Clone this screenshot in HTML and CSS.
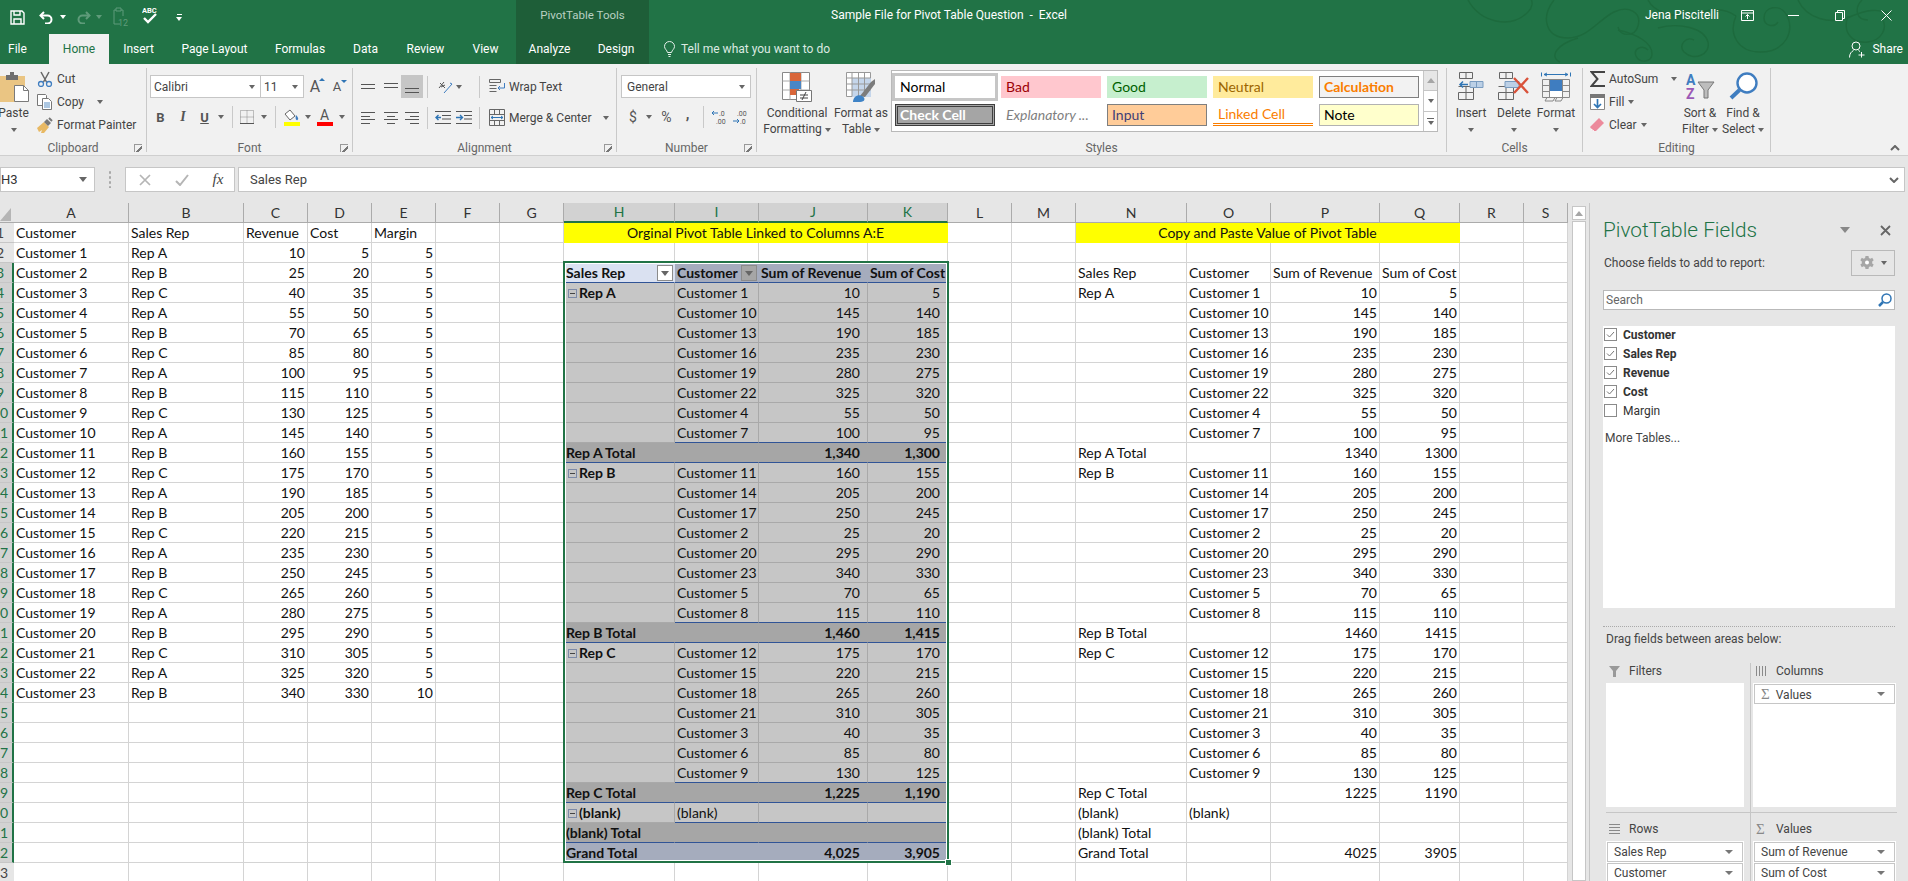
FILE: index.html
```html
<!DOCTYPE html>
<html lang="en">
<head>
<meta charset="utf-8">
<title>Sample File for Pivot Table Question - Excel</title>
<link rel="stylesheet" href="styles.css">
</head>
<body>
<header class="title">
  <svg class="swirl" width="450" height="64" viewBox="0 0 450 64" fill="none" stroke="#1d6a3d" stroke-width="1.4">
    <path d="M10 0c12 22 42 30 60 12 10-10 0-22-12-14M96 0c-14 18-8 38 14 38 20 0 30-18 46-26 14-7 28 0 24 14-3 11-18 11-20 1"/>
    <path d="M160 30c18 4 34 12 34 24 0 8-12 10-16 2-3-7 6-12 12-6M120 38c-20 6-30 18-18 24M190 0c6 12 24 18 44 14 18-4 30-8 44 2"/>
    <path d="M200 28c22-6 46 0 50 14 3 12-14 20-24 10-6-7 2-16 10-12M278 16c-8 18 2 36 24 36 26 0 36-22 26-38-6-10-22-8-22 4 0 8 10 10 14 4"/>
    <path d="M340 0c8 18 32 26 54 16 14-6 26-8 40-2M390 16c-6 16 4 28 20 26 14-2 20-14 14-24M404 0c-8 8-6 20 6 20"/>
  </svg>
  <div class="trow">
    <div class="qat">
      <svg width="15" height="15" viewBox="0 0 15 15" fill="none" stroke="#fff" stroke-width="1.4"><path d="M1 1h11l2 2v11H1z"/><path d="M4 1v4h6V1M4 14V9h7v5"/></svg>
      <svg class="i-undo" width="15" height="13" viewBox="0 0 15 13" fill="none" stroke="#fff" stroke-width="2"><path d="M5 1 1.500 4.500 5 8"/><path d="M2 4.500h6.500a4 4 0 0 1 0 8H6"/></svg>
      <i class="c cw c-undo"></i>
      <svg class="i-redo" width="15" height="13" viewBox="0 0 15 13" fill="none" stroke="#5f9b7a" stroke-width="2"><path d="M10 1l3.500 3.500L10 8"/><path d="M13 4.500H6.500a4 4 0 0 0 0 8H9"/></svg>
      <i class="c cd c-redo"></i>
      <svg class="i-touch" width="15" height="20" viewBox="0 0 15 20" fill="none" stroke="#5f9b7a"><path d="M3 3H1v14h6M8 3h2v6M3 1h5v3H3z"/><text x="5" y="19" font-size="9" fill="#5f9b7a" stroke="none" font-family="Roboto">12</text></svg>
      <svg class="i-abc" width="16" height="19" viewBox="0 0 16 19"><text x="0" y="7" font-size="7.500" font-weight="700" fill="#fff" font-family="Roboto">ABC</text><path d="M2 12l4 4 8-8" fill="none" stroke="#fff" stroke-width="2.400"/></svg>
      <span class="custom"><b></b><i class="c cw"></i></span>
    </div>
    <div class="ctx ctxtitle">PivotTable Tools</div>
    <div class="doc">Sample File for Pivot Table Question&nbsp; -&nbsp; Excel</div>
    <div class="winc">
      <span class="user">Jena Piscitelli</span>
      <svg width="13" height="11" viewBox="0 0 13 11" fill="none" stroke="#fff"><path d="M.5.500h12v10H.500zM.5 3h12M6.500 9V4.500M4.500 6.500l2-2 2 2"/></svg>
      <svg width="11" height="11" viewBox="0 0 11 11" stroke="#fff"><path d="M0 5.500h11"/></svg>
      <svg width="10" height="11" viewBox="0 0 10 11" fill="none" stroke="#fff"><path d="M.5 2.500h7v8h-7zM2.500 2.500V.5h7v8h-2"/></svg>
      <svg width="11" height="11" viewBox="0 0 11 11" stroke="#fff"><path d="M.5.500l10 10M10.500.500l-10 10"/></svg>
    </div>
  </div>
  <div class="trow tabsrow">
    <nav class="tabs">
      <span class="file">File</span><span class="on">Home</span><span>Insert</span><span>Page Layout</span><span>Formulas</span><span>Data</span><span>Review</span><span>View</span>
    </nav>
    <div class="ctx ctxtabs"><span>Analyze</span><span>Design</span></div>
    <div class="tell">
      <svg width="11" height="16" viewBox="0 0 11 16" fill="none" stroke="#e6f0ea"><path d="M3.500 11.500C3 9 .5 8 .5 5.500a5 5 0 0 1 10 0c0 2.500-2.500 3.500-3 6zM4 13.500h3M4.500 15.500h2"/></svg>
      <span>Tell me what you want to do</span>
    </div>
    <div class="share">
      <svg width="16" height="17" viewBox="0 0 16 17" fill="none" stroke="#fff"><circle cx="7" cy="5" r="4"/><path d="M.5 16.500c0-4 2-6 4-7M9.500 9.500l1.500 1M12.500 11v5.500M9.500 14h6"/></svg>
      <span>Share</span>
    </div>
  </div>
</header>

<section class="ribbon">
  <div class="grp g-clip">
    <div class="gtop clip">
      <div class="big paste">
        <div class="bi"><svg width="30" height="30" viewBox="0 0 30 30"><path d="M0 4h25v26H0z" fill="#eac583"/><path d="M6 3h12v5H6z" fill="#6f6f6f"/><path d="M10 0h4v4h-4z" fill="#6f6f6f"/><path d="M14.500 13.500h9l5 5v11h-14z" fill="#fff" stroke="#7a7a7a"/><path d="M23.500 13.500v5h5" fill="none" stroke="#7a7a7a"/></svg></div>
        <span>Paste</span><span><i class="c"></i></span>
      </div>
      <div class="clipcol">
        <div class="tool"><svg width="16" height="16" viewBox="0 0 16 16" fill="none"><path d="M4 1l5.500 10M12 1 6.500 11" stroke="#666" stroke-width="1.500"/><circle cx="4" cy="13" r="2.500" stroke="#3f7dc0" stroke-width="1.300"/><circle cx="12" cy="13" r="2.500" stroke="#3f7dc0" stroke-width="1.300"/></svg><span>Cut</span></div>
        <div class="tool"><svg width="16" height="16" viewBox="0 0 16 16" fill="#fff" stroke="#777"><path d="M.5.500h8l1 1v10H.5z"/><path d="M5.500 4.500h6l3 3v8h-9z"/><path d="M7 9h6M7 11h6M7 13h6" stroke="#5b8fc4"/></svg><span>Copy</span><i class="c copyc"></i></div>
        <div class="tool"><svg width="16" height="16" viewBox="0 0 16 16"><path d="M0 11 7 5l5 5-5 6H4l1-3-3 2z" fill="#e8b964"/><path d="M7 5l3-3 4 4-3 3z" fill="#777"/><path d="M12 1l3 3" stroke="#777" stroke-width="2"/></svg><span>Format Painter</span></div>
      </div>
    </div>
    <div class="glabel">Clipboard</div><i class="launch"></i>
  </div>

  <div class="grp g-font">
    <div class="gtop">
      <div class="rw1 font1">
        <div class="combo cf"><span>Calibri</span><i class="c"></i></div>
        <div class="combo cs"><span>11</span><i class="c"></i></div>
        <span class="gA up">A<i></i></span><span class="gA dn">A<i></i></span>
      </div>
      <div class="rw2 font2">
        <b class="tb">B</b><i class="ti">I</i><u class="tu">U</u><i class="c"></i><i class="sep"></i>
        <svg width="14" height="14" viewBox="0 0 14 14" fill="none" stroke="#888" stroke-dasharray="1 1"><path d="M.5.500h13v13H.5zM7 .5v13M.5 7h13"/><path d="M0 13.500h14" stroke="#555" stroke-dasharray="none"/></svg><i class="c"></i><i class="sep"></i>
        <svg width="16" height="17" viewBox="0 0 16 17"><path d="M1 5l5-4 5 6-5 4z" fill="#fff" stroke="#666"/><path d="M12 6c2 2 3 4 1.500 5S11 9 12 6z" fill="#3f7dc0"/><path d="M0 13h16v4H0z" fill="#ff0"/></svg><i class="c"></i>
        <span class="fc">A</span><i class="c"></i>
      </div>
    </div>
    <div class="glabel">Font</div><i class="launch"></i>
  </div>

  <div class="grp g-align">
    <div class="gtop">
      <div class="rw1 al1">
        <svg class="ln" width="14" height="10" viewBox="0 0 14 10" stroke="#555"><path d="M0 .5h14M0 4.500h14M0 8.500h14" transform="translate(0 -2)"/></svg>
        <svg class="ln" width="14" height="10" viewBox="0 0 14 10" stroke="#555"><path d="M0 1.500h14M0 5.500h14"/></svg>
        <span class="alsel"><svg width="14" height="6" viewBox="0 0 14 6" stroke="#555"><path d="M0 .5h14M0 4.500h14"/></svg></span>
        <i class="sep"></i>
        <span class="orient"><svg width="16" height="15" viewBox="0 0 16 15" fill="none" stroke="#555"><path d="M2 9l5-6M3 4l5 5M4 8l4-2"/><path d="M7 14l8-9-2-1" stroke="#3f7dc0"/></svg><i class="c"></i></span>
        <i class="sep"></i>
        <span class="tool wrap"><svg width="16" height="17" viewBox="0 0 16 17" fill="none" stroke="#666"><path d="M.5 1.500h11v3H.5zM.5 7.500h7M.5 10.500h7M.5 13.500h7"/><path d="M15.500 5v5h-6M11 8l-2 2 2 2" stroke="#3f7dc0"/></svg><span>Wrap Text</span></span>
      </div>
      <div class="rw2 al2">
        <svg width="14" height="12" viewBox="0 0 14 12" stroke="#555"><path d="M0 .5h14M0 4.500h9M0 7.500h14M0 11.500h9"/></svg>
        <svg width="14" height="12" viewBox="0 0 14 12" stroke="#555"><path d="M0 .5h14M3 4.500h8M0 7.500h14M3 11.500h8"/></svg>
        <svg width="14" height="12" viewBox="0 0 14 12" stroke="#555"><path d="M0 .5h14M5 4.500h9M0 7.500h14M5 11.500h9"/></svg>
        <i class="sep"></i>
        <svg width="16" height="13" viewBox="0 0 16 13" fill="none" stroke="#555"><path d="M0 .5h16M7 4.500h9M7 8h9M0 12.500h16"/><path d="M6 6.500H1M3.500 4l-2.500 2.500L3.500 9" stroke="#2f75b5" stroke-width="1.400"/></svg>
        <svg width="16" height="13" viewBox="0 0 16 13" fill="none" stroke="#555"><path d="M0 .5h16M8 4.500h8M8 8h8M0 12.500h16"/><path d="M0 6.500h6M4 4l2.500 2.500L4 9" stroke="#2f75b5" stroke-width="1.400"/></svg>
        <i class="sep"></i>
        <span class="tool wrap"><svg width="16" height="17" viewBox="0 0 16 17" fill="none" stroke="#666"><path d="M.5.500h15v16H.5zM.5 5.500h15M.5 11.500h15M5.500.5v5M10.500.5v5M5.500 11.500v5M10.500 11.500v5"/><path d="M2 8.500h12M4 7l-2 1.500L4 10M12 7l2 1.500L12 10" stroke="#2f75b5"/></svg><span>Merge &amp; Center</span><i class="c mergec"></i></span>
      </div>
    </div>
    <div class="glabel">Alignment</div><i class="launch"></i>
  </div>

  <div class="grp g-num">
    <div class="gtop">
      <div class="rw1"><div class="combo cg"><span>General</span><i class="c"></i></div></div>
      <div class="rw2 num2">
        <span class="dollar">$</span><i class="c"></i><span class="pct">%</span><b class="comma">,</b><i class="sep"></i>
        <svg width="16" height="15" viewBox="0 0 16 15"><path d="M7 3H1M3 1 1 3l2 2" fill="none" stroke="#2f75b5"/><text x="8" y="6" font-size="7" fill="#555" font-family="Roboto">.0</text><text x="5" y="14" font-size="7" fill="#555" font-family="Roboto">.00</text></svg>
        <svg width="15" height="15" viewBox="0 0 15 15"><text x="4" y="6" font-size="7" fill="#555" font-family="Roboto">.00</text><path d="M0 11h6M4 9l2 2-2 2" fill="none" stroke="#2f75b5"/><text x="7" y="14" font-size="7" fill="#555" font-family="Roboto">.0</text></svg>
      </div>
    </div>
    <div class="glabel">Number</div><i class="launch"></i>
  </div>

  <div class="grp g-styles">
    <div class="gtop stylesrow">
      <div class="big bcf">
        <div class="bi"><svg width="30" height="30" viewBox="0 0 30 30" fill="none"><path d="M.5.500h27v27H.5z" fill="#fff" stroke="#888"/><path d="M.5 9h27M.5 18h27M8 .5v27M19 .5v27" stroke="#aaa"/><path d="M8 1h11v8H8z" fill="#d9663a"/><path d="M8 9h11v8H8z" fill="#4a86c5"/><path d="M8 17h9v6H8z" fill="#d9663a"/><path d="M14.500 18.500h15v11h-15z" fill="#fff" stroke="#777"/><path d="M18 23h8M18 26h8M24 20l-4 8" stroke="#444"/></svg></div>
        <span>Conditional</span><span>Formatting <i class="c"></i></span>
      </div>
      <div class="big bft">
        <div class="bi"><svg width="30" height="30" viewBox="0 0 30 30" fill="none"><path d="M.5.500h24v24H.5z" fill="#fff" stroke="#999"/><path d="M6 6h19v19H6z" fill="#c5d6eb"/><path d="M.5 6h24M.5 12h24M.5 18h24M6 .5v24M12.500.5v24M18.500.5v24" stroke="#999"/><path d="M14 24l11-14 4-3 0 5-10 13z" fill="#7c7c7c"/><path d="M7 30c0-5 5-8 9-6s3 6-2 6z" fill="#3f83c6"/></svg></div>
        <span>Format as</span><span>Table <i class="c"></i></span>
      </div>
      <div class="gallery">
        <div class="cellstyles">
          <span class="st s-normal">Normal</span><span class="st s-bad">Bad</span><span class="st s-good">Good</span><span class="st s-neutral">Neutral</span><span class="st s-calc">Calculation</span>
          <span class="st s-check">Check Cell</span><span class="st s-expl">Explanatory ...</span><span class="st s-input">Input</span><span class="st s-linked">Linked Cell</span><span class="st s-note">Note</span>
        </div>
        <div class="gscroll"><span class="gup"><i class="ct"></i></span><span><i class="c"></i></span><span class="gmore"><i class="c"></i></span></div>
      </div>
    </div>
    <div class="glabel">Styles</div>
  </div>

  <div class="grp g-cells">
    <div class="gtop cellsrow">
      <div class="big">
        <div class="bi"><svg width="26" height="28" viewBox="0 0 26 28" fill="none" stroke="#666"><path d="M1.500.500h13v6h-13zM8 .5v6M.5 20.500h15v7H.5zM8 14.500v13M.5 14.500h15v6"/><path d="M12 9.500h13v6H12zM18.500 9.500v6" fill="#bcd0e6" stroke="#7a9cc0"/><path d="M10 12.500H2M5 9.500l-3 3 3 3" stroke="#2f75b5" stroke-width="1.500"/></svg></div>
        <span>Insert</span><span><i class="c"></i></span>
      </div>
      <div class="big">
        <div class="bi"><svg width="32" height="28" viewBox="0 0 32 28" fill="none" stroke="#666"><path d="M1.500.500h13v6h-13zM8 .5v6M.5 20.500h15v7H.5zM8 14.500v13M.5 14.500h15v6"/><path d="M7 9.500h14v6H7z" fill="#bcd0e6" stroke="#7a9cc0"/><path d="M16 6l14 15M30 6 16 21" stroke="#d9523a" stroke-width="2.400"/></svg></div>
        <span>Delete</span><span><i class="c"></i></span>
      </div>
      <div class="big">
        <div class="bi"><svg width="30" height="30" viewBox="0 0 30 30" fill="none"><path d="M.5.500v4M29.500.5v4M3 2.500h24M6 1 3 2.500 6 4M24 1l3 1.500L24 4" stroke="#2f75b5"/><path d="M1.500 7.500h27v18h-27zM1.500 13.500h27M1.500 19.500h27M8.500 7.500v18M21.500 7.500v18M8.500 25.500v-6" stroke="#888"/><path d="M9 8h12v17H9z" fill="#fff"/><path d="M9 8h12v11H9z" fill="#3f7dc0"/><path d="M6 25.500l-2 3.500h8l2-3.500M16 25.500l-2 3.500h6l2-3.500" stroke="#888"/></svg></div>
        <span>Format</span><span><i class="c"></i></span>
      </div>
    </div>
    <div class="glabel">Cells</div>
  </div>

  <div class="grp g-edit">
    <div class="gtop editrow">
      <div class="editcol">
        <div class="tool"><svg width="15" height="16" viewBox="0 0 15 16" fill="none" stroke="#444" stroke-width="2"><path d="M15 1H1.500l6 7-6 7H15"/></svg><span>AutoSum</span><i class="c sumc"></i></div>
        <div class="tool"><svg width="15" height="16" viewBox="0 0 15 16"><path d="M.5.500h14v15H.5z" fill="#fff" stroke="#888"/><path d="M0 0h15v4H0z" fill="#777"/><path d="M7.500 5v8M4 10l3.500 3.500L11 10" fill="none" stroke="#2f75b5" stroke-width="1.700"/></svg><span>Fill</span><i class="c"></i></div>
        <div class="tool"><svg width="15" height="15" viewBox="0 0 15 15"><path d="M0 10 9 1l5 5-8 8H3z" fill="#ec8a9c"/><path d="M1 12l3 2" stroke="#fff"/></svg><span>Clear</span><i class="c"></i></div>
      </div>
      <div class="big">
        <div class="bi"><svg width="30" height="30" viewBox="0 0 30 30" overflow="visible"><text x="1" y="13" font-size="14" font-weight="700" fill="#3f7dc0" font-family="Roboto">A</text><text x="1" y="27" font-size="14" font-weight="700" fill="#9b59b6" font-family="Roboto">Z</text><path d="M13 10h16l-6 8v8h-4v-8z" fill="#bdbdbd" stroke="#777"/></svg></div>
        <span>Sort &amp;</span><span>Filter <i class="c"></i></span>
      </div>
      <div class="big">
        <div class="bi"><svg width="29" height="28" viewBox="0 0 29 28" fill="none"><circle cx="18" cy="11" r="9.500" stroke="#3f7dc0" stroke-width="2.400" fill="#fff"/><path d="M10.500 18 2 26" stroke="#3f7dc0" stroke-width="4"/></svg></div>
        <span>Find &amp;</span><span>Select <i class="c"></i></span>
      </div>
    </div>
    <div class="glabel">Editing</div>
  </div>
  <svg class="collapse" width="10" height="6" viewBox="0 0 10 6" fill="none" stroke="#666" stroke-width="2"><path d="M1 5l4-4 4 4"/></svg>
</section>

<section class="fbar">
  <div class="fbox namebox"><span>H3</span><i class="c cdark"></i></div>
  <div class="grip"></div>
  <div class="fbox fxbox">
    <svg width="12" height="12" viewBox="0 0 12 12" stroke="#b5b5b5" stroke-width="1.700"><path d="M1 1l10 10M11 1 1 11"/></svg>
    <svg width="14" height="12" viewBox="0 0 14 12" fill="none" stroke="#b5b5b5" stroke-width="2"><path d="M1 7l4 4 8-10"/></svg>
    <em>fx</em>
  </div>
  <div class="fbox finput"><span>Sales Rep</span><svg width="10" height="6" viewBox="0 0 10 6" fill="none" stroke="#666" stroke-width="2"><path d="M1 1l4 4 4-4"/></svg></div>
</section>

<main class="work">
  <div class="sheet">
    <table class="sh">
      <colgroup><col class="w14"><col class="w115"><col class="w115"><col class="w64"><col class="w64"><col class="w64"><col class="w64"><col class="w64"><col class="w111"><col class="w84"><col class="w109"><col class="w80"><col class="w64"><col class="w64"><col class="w111"><col class="w84"><col class="w109"><col class="w80"><col class="w64"><col class="w44"></colgroup>
      <thead><tr><th class="corner"><svg width="11" height="13" viewBox="0 0 11 13"><path d="M0 13 11 0v13z" fill="#b5b5b5"/></svg></th><th>A</th><th>B</th><th>C</th><th>D</th><th>E</th><th>F</th><th>G</th><th class="sc">H</th><th class="sc">I</th><th class="sc">J</th><th class="sc">K</th><th>L</th><th>M</th><th>N</th><th>O</th><th>P</th><th>Q</th><th>R</th><th>S</th></tr></thead>
      <tbody>
<tr class="tl"><th><span>1</span></th><td>Customer</td><td>Sales Rep</td><td>Revenue</td><td>Cost</td><td>Margin</td><td></td><td></td><td colspan="4" class="y">Orginal Pivot Table Linked to Columns A:E</td><td></td><td></td><td colspan="4" class="y">Copy and Paste Value of Pivot Table</td><td></td><td></td></tr>
<tr><th><span>2</span></th><td>Customer 1</td><td>Rep A</td><td>10</td><td>5</td><td>5</td><td></td><td></td><td></td><td></td><td></td><td></td><td></td><td></td><td></td><td></td><td></td><td></td><td></td><td></td></tr>
<tr class="ph"><th class="sr"><span>3</span></th><td>Customer 2</td><td>Rep B</td><td>25</td><td>20</td><td>5</td><td></td><td></td><td class="act">Sales Rep<i class="fb"></i></td><td>Customer<i class="fb"></i></td><td>Sum of Revenue</td><td>Sum of Cost</td><td></td><td></td><td>Sales Rep</td><td>Customer</td><td>Sum of Revenue</td><td>Sum of Cost</td><td></td><td></td></tr>
<tr class="pr"><th class="sr"><span>4</span></th><td>Customer 3</td><td>Rep C</td><td>40</td><td>35</td><td>5</td><td></td><td></td><td><i class="mn"></i><b>Rep A</b></td><td>Customer 1</td><td>10</td><td>5</td><td></td><td></td><td>Rep A</td><td>Customer 1</td><td>10</td><td>5</td><td></td><td></td></tr>
<tr class="pr"><th class="sr"><span>5</span></th><td>Customer 4</td><td>Rep A</td><td>55</td><td>50</td><td>5</td><td></td><td></td><td></td><td>Customer 10</td><td>145</td><td>140</td><td></td><td></td><td></td><td>Customer 10</td><td>145</td><td>140</td><td></td><td></td></tr>
<tr class="pr"><th class="sr"><span>6</span></th><td>Customer 5</td><td>Rep B</td><td>70</td><td>65</td><td>5</td><td></td><td></td><td></td><td>Customer 13</td><td>190</td><td>185</td><td></td><td></td><td></td><td>Customer 13</td><td>190</td><td>185</td><td></td><td></td></tr>
<tr class="pr"><th class="sr"><span>7</span></th><td>Customer 6</td><td>Rep C</td><td>85</td><td>80</td><td>5</td><td></td><td></td><td></td><td>Customer 16</td><td>235</td><td>230</td><td></td><td></td><td></td><td>Customer 16</td><td>235</td><td>230</td><td></td><td></td></tr>
<tr class="pr"><th class="sr"><span>8</span></th><td>Customer 7</td><td>Rep A</td><td>100</td><td>95</td><td>5</td><td></td><td></td><td></td><td>Customer 19</td><td>280</td><td>275</td><td></td><td></td><td></td><td>Customer 19</td><td>280</td><td>275</td><td></td><td></td></tr>
<tr class="pr"><th class="sr"><span>9</span></th><td>Customer 8</td><td>Rep B</td><td>115</td><td>110</td><td>5</td><td></td><td></td><td></td><td>Customer 22</td><td>325</td><td>320</td><td></td><td></td><td></td><td>Customer 22</td><td>325</td><td>320</td><td></td><td></td></tr>
<tr class="pr"><th class="sr"><span>10</span></th><td>Customer 9</td><td>Rep C</td><td>130</td><td>125</td><td>5</td><td></td><td></td><td></td><td>Customer 4</td><td>55</td><td>50</td><td></td><td></td><td></td><td>Customer 4</td><td>55</td><td>50</td><td></td><td></td></tr>
<tr class="pr pl"><th class="sr"><span>11</span></th><td>Customer 10</td><td>Rep A</td><td>145</td><td>140</td><td>5</td><td></td><td></td><td></td><td>Customer 7</td><td>100</td><td>95</td><td></td><td></td><td></td><td>Customer 7</td><td>100</td><td>95</td><td></td><td></td></tr>
<tr class="pt"><th class="sr"><span>12</span></th><td>Customer 11</td><td>Rep B</td><td>160</td><td>155</td><td>5</td><td></td><td></td><td>Rep A Total</td><td></td><td>1,340</td><td>1,300</td><td></td><td></td><td>Rep A Total</td><td></td><td>1340</td><td>1300</td><td></td><td></td></tr>
<tr class="pr"><th class="sr"><span>13</span></th><td>Customer 12</td><td>Rep C</td><td>175</td><td>170</td><td>5</td><td></td><td></td><td><i class="mn"></i><b>Rep B</b></td><td>Customer 11</td><td>160</td><td>155</td><td></td><td></td><td>Rep B</td><td>Customer 11</td><td>160</td><td>155</td><td></td><td></td></tr>
<tr class="pr"><th class="sr"><span>14</span></th><td>Customer 13</td><td>Rep A</td><td>190</td><td>185</td><td>5</td><td></td><td></td><td></td><td>Customer 14</td><td>205</td><td>200</td><td></td><td></td><td></td><td>Customer 14</td><td>205</td><td>200</td><td></td><td></td></tr>
<tr class="pr"><th class="sr"><span>15</span></th><td>Customer 14</td><td>Rep B</td><td>205</td><td>200</td><td>5</td><td></td><td></td><td></td><td>Customer 17</td><td>250</td><td>245</td><td></td><td></td><td></td><td>Customer 17</td><td>250</td><td>245</td><td></td><td></td></tr>
<tr class="pr"><th class="sr"><span>16</span></th><td>Customer 15</td><td>Rep C</td><td>220</td><td>215</td><td>5</td><td></td><td></td><td></td><td>Customer 2</td><td>25</td><td>20</td><td></td><td></td><td></td><td>Customer 2</td><td>25</td><td>20</td><td></td><td></td></tr>
<tr class="pr"><th class="sr"><span>17</span></th><td>Customer 16</td><td>Rep A</td><td>235</td><td>230</td><td>5</td><td></td><td></td><td></td><td>Customer 20</td><td>295</td><td>290</td><td></td><td></td><td></td><td>Customer 20</td><td>295</td><td>290</td><td></td><td></td></tr>
<tr class="pr"><th class="sr"><span>18</span></th><td>Customer 17</td><td>Rep B</td><td>250</td><td>245</td><td>5</td><td></td><td></td><td></td><td>Customer 23</td><td>340</td><td>330</td><td></td><td></td><td></td><td>Customer 23</td><td>340</td><td>330</td><td></td><td></td></tr>
<tr class="pr"><th class="sr"><span>19</span></th><td>Customer 18</td><td>Rep C</td><td>265</td><td>260</td><td>5</td><td></td><td></td><td></td><td>Customer 5</td><td>70</td><td>65</td><td></td><td></td><td></td><td>Customer 5</td><td>70</td><td>65</td><td></td><td></td></tr>
<tr class="pr pl"><th class="sr"><span>20</span></th><td>Customer 19</td><td>Rep A</td><td>280</td><td>275</td><td>5</td><td></td><td></td><td></td><td>Customer 8</td><td>115</td><td>110</td><td></td><td></td><td></td><td>Customer 8</td><td>115</td><td>110</td><td></td><td></td></tr>
<tr class="pt"><th class="sr"><span>21</span></th><td>Customer 20</td><td>Rep B</td><td>295</td><td>290</td><td>5</td><td></td><td></td><td>Rep B Total</td><td></td><td>1,460</td><td>1,415</td><td></td><td></td><td>Rep B Total</td><td></td><td>1460</td><td>1415</td><td></td><td></td></tr>
<tr class="pr"><th class="sr"><span>22</span></th><td>Customer 21</td><td>Rep C</td><td>310</td><td>305</td><td>5</td><td></td><td></td><td><i class="mn"></i><b>Rep C</b></td><td>Customer 12</td><td>175</td><td>170</td><td></td><td></td><td>Rep C</td><td>Customer 12</td><td>175</td><td>170</td><td></td><td></td></tr>
<tr class="pr"><th class="sr"><span>23</span></th><td>Customer 22</td><td>Rep A</td><td>325</td><td>320</td><td>5</td><td></td><td></td><td></td><td>Customer 15</td><td>220</td><td>215</td><td></td><td></td><td></td><td>Customer 15</td><td>220</td><td>215</td><td></td><td></td></tr>
<tr class="pr"><th class="sr"><span>24</span></th><td>Customer 23</td><td>Rep B</td><td>340</td><td>330</td><td>10</td><td></td><td></td><td></td><td>Customer 18</td><td>265</td><td>260</td><td></td><td></td><td></td><td>Customer 18</td><td>265</td><td>260</td><td></td><td></td></tr>
<tr class="pr"><th class="sr"><span>25</span></th><td></td><td></td><td></td><td></td><td></td><td></td><td></td><td></td><td>Customer 21</td><td>310</td><td>305</td><td></td><td></td><td></td><td>Customer 21</td><td>310</td><td>305</td><td></td><td></td></tr>
<tr class="pr"><th class="sr"><span>26</span></th><td></td><td></td><td></td><td></td><td></td><td></td><td></td><td></td><td>Customer 3</td><td>40</td><td>35</td><td></td><td></td><td></td><td>Customer 3</td><td>40</td><td>35</td><td></td><td></td></tr>
<tr class="pr"><th class="sr"><span>27</span></th><td></td><td></td><td></td><td></td><td></td><td></td><td></td><td></td><td>Customer 6</td><td>85</td><td>80</td><td></td><td></td><td></td><td>Customer 6</td><td>85</td><td>80</td><td></td><td></td></tr>
<tr class="pr pl"><th class="sr"><span>28</span></th><td></td><td></td><td></td><td></td><td></td><td></td><td></td><td></td><td>Customer 9</td><td>130</td><td>125</td><td></td><td></td><td></td><td>Customer 9</td><td>130</td><td>125</td><td></td><td></td></tr>
<tr class="pt"><th class="sr"><span>29</span></th><td></td><td></td><td></td><td></td><td></td><td></td><td></td><td>Rep C Total</td><td></td><td>1,225</td><td>1,190</td><td></td><td></td><td>Rep C Total</td><td></td><td>1225</td><td>1190</td><td></td><td></td></tr>
<tr class="pr pl"><th class="sr"><span>30</span></th><td></td><td></td><td></td><td></td><td></td><td></td><td></td><td><i class="mn"></i><b>(blank)</b></td><td>(blank)</td><td></td><td></td><td></td><td></td><td>(blank)</td><td>(blank)</td><td></td><td></td><td></td><td></td></tr>
<tr class="pt"><th class="sr"><span>31</span></th><td></td><td></td><td></td><td></td><td></td><td></td><td></td><td>(blank) Total</td><td></td><td></td><td></td><td></td><td></td><td>(blank) Total</td><td></td><td></td><td></td><td></td><td></td></tr>
<tr class="pt pg"><th class="sr"><span>32</span></th><td></td><td></td><td></td><td></td><td></td><td></td><td></td><td>Grand Total</td><td></td><td>4,025</td><td>3,905</td><td></td><td></td><td>Grand Total</td><td></td><td>4025</td><td>3905</td><td></td><td></td></tr>
<tr><th><span>33</span></th><td></td><td></td><td></td><td></td><td></td><td></td><td></td><td></td><td></td><td></td><td></td><td></td><td></td><td></td><td></td><td></td><td></td><td></td><td></td></tr>
      </tbody>
    </table>
    <div class="sel"><i class="handle"></i></div>
  </div>
  <div class="vscroll"><span class="vup"><i class="ct"></i></span><span class="vtrack"></span></div>
  <aside class="panel">
    <div class="phead"><h2>PivotTable Fields</h2><i class="c pcaret"></i><svg width="11" height="11" viewBox="0 0 11 11" stroke="#666" stroke-width="1.800"><path d="M1 1l9 9M10 1l-9 9"/></svg></div>
    <div class="pchoose"><span>Choose fields to add to report:</span><div class="gear"><svg width="14" height="14" viewBox="0 0 14 14"><path d="M5.500 0h3l.4 2 1.500.7 1.800-1 1.500 2.500-1.500 1.300v1.900l1.500 1.200-1.500 2.600-1.800-1-1.500.8-.4 2h-3l-.4-2-1.500-.8-1.800 1L.3 8.600l1.500-1.200V5.500L.3 4.200l1.500-2.500 1.800 1 1.500-.7z" fill="#a6a6a6"/><circle cx="7" cy="6.500" r="2" fill="#fff"/></svg><i class="c"></i></div></div>
    <div class="psearch"><span>Search</span><svg width="14" height="14" viewBox="0 0 14 14" fill="none" stroke="#2f75b5"><circle cx="8.500" cy="5.500" r="4.500" stroke-width="1.500"/><path d="M5 9l-4 4" stroke-width="2.500"/></svg></div>
    <div class="plist">
      <label class="f on"><i class="cb"><svg width="11" height="11" viewBox="0 0 11 11" fill="none" stroke="#777"><path d="M2 5.500l2.500 2.500L9 3"/></svg></i>Customer</label>
      <label class="f on"><i class="cb"><svg width="11" height="11" viewBox="0 0 11 11" fill="none" stroke="#777"><path d="M2 5.500l2.500 2.500L9 3"/></svg></i>Sales Rep</label>
      <label class="f on"><i class="cb"><svg width="11" height="11" viewBox="0 0 11 11" fill="none" stroke="#777"><path d="M2 5.500l2.500 2.500L9 3"/></svg></i>Revenue</label>
      <label class="f on"><i class="cb"><svg width="11" height="11" viewBox="0 0 11 11" fill="none" stroke="#777"><path d="M2 5.500l2.500 2.500L9 3"/></svg></i>Cost</label>
      <label class="f"><i class="cb"></i>Margin</label>
      <div class="more">More Tables...</div>
    </div>
    <div class="pdrag">Drag fields between areas below:</div>
    <div class="areas">
      <div class="area"><div class="ah"><svg width="11" height="11" viewBox="0 0 11 11"><path d="M0 0h11L7 5v6H4V5z" fill="#999"/></svg><span>Filters</span></div><div class="abox"></div></div>
      <div class="area ar"><div class="ah"><svg width="11" height="10" viewBox="0 0 11 10" stroke="#8a8a8a"><path d="M.5 0v10M3.500 0v10M6.500 0v10M9.500 0v10"/></svg><span>Columns</span></div><div class="abox"><div class="pill"><span><em>Σ</em>Values</span><i class="c"></i></div></div></div>
      <div class="area low"><div class="ah"><svg width="11" height="10" viewBox="0 0 11 10" stroke="#8a8a8a"><path d="M0 .5h11M0 3.500h11M0 6.500h11M0 9.500h11"/></svg><span>Rows</span></div><div class="abox"><div class="pill"><span>Sales Rep</span><i class="c"></i></div><div class="pill"><span>Customer</span><i class="c"></i></div></div></div>
      <div class="area ar low"><div class="ah"><em>Σ</em><span>Values</span></div><div class="abox"><div class="pill"><span>Sum of Revenue</span><i class="c"></i></div><div class="pill"><span>Sum of Cost</span><i class="c"></i></div></div></div>
    </div>
  </aside>
</main>
</body>
</html>
```
FILE: styles.css
```css
*{box-sizing:border-box}
html,body{margin:0;height:881px;width:1908px;overflow:hidden}
body{font:12px Roboto,sans-serif;color:#444;background:#e6e6e6;display:flex;flex-direction:column}
i{font-style:normal}
.c{display:inline-block;width:0;height:0;border:3px solid transparent;border-top:4px solid #666;border-bottom:0;vertical-align:middle}
.cw{border-top-color:#fff}
.cd{border-top-color:#5f9b7a}
.cdark{border-width:4px;border-top-width:5px;border-bottom:0;border-top-color:#666}
.ct{display:inline-block;width:0;height:0;border:4px solid transparent;border-bottom:5px solid #a6a6a6;border-top:0}

.title{height:64px;background:#217346;color:#fff;position:relative;flex:none}
.swirl{position:absolute;left:1458px;top:0}
.trow{display:flex;height:34px;position:relative}
.tabsrow{height:30px}
.qat{width:516px;display:flex;align-items:center;padding-left:10px}
.i-undo{margin-left:14px}
.c-undo{margin-left:6px}
.i-redo{margin-left:10px}
.c-redo{margin-left:5px}
.i-touch{margin-left:11px}
.i-abc{margin-left:14px;margin-top:-3px}
.custom{margin-left:18px;display:flex;flex-direction:column;align-items:center;gap:2px}
.custom b{width:5px;height:1px;background:#fff}
.ctx{width:133px;background:#1e5e38;flex:none}
.ctxtitle{text-align:center;line-height:30px;color:#b9d0c2;font-size:11.500px}
.doc{padding-left:182px;line-height:30px;white-space:nowrap;color:#fff}
.winc{margin-left:auto;width:263px;display:grid;grid-template-columns:96px 47px 47px 46px 20px;align-items:center;justify-items:start;height:30px}
.user{white-space:nowrap;color:#fff}
.tabs{width:516px;display:grid;grid-template-columns:49px 60px 59px 93px 78px 53px 67px 53px 4px;text-align:center;line-height:30px}
.tabs .file{text-align:left;padding-left:8px}
.tabs .on{background:#f1f1f1;color:#217346}
.ctxtabs{display:grid;grid-template-columns:67px 66px;text-align:center;line-height:30px}
.tell{display:flex;align-items:center;gap:6px;padding-left:15px;color:#dceae2}
.share{margin-left:auto;display:flex;align-items:center;gap:7px;padding-right:5px}

.ribbon{height:92px;flex:none;background:#f1f1f1;border-bottom:1px solid #cfcfcf;display:flex;position:relative;padding-top:4px}
.grp{height:84px;border-right:1px solid #c9c9c9;position:relative;flex:none}
.g-clip{width:147px}.g-font{width:206px}.g-align{width:264px}.g-num{width:140px}.g-styles{width:690px}.g-cells{width:136px}.g-edit{width:188px}
.gtop{height:72px;display:flow-root}
.glabel{height:12px;line-height:16px;text-align:center;color:#666}
.launch{position:absolute;right:4px;bottom:0;width:8px;height:8px;border-left:1px solid #999;border-top:1px solid #999;background:linear-gradient(135deg,transparent 55%,#777 55%,#777 75%,transparent 75%)}
.big{display:flex;flex-direction:column;align-items:center;white-space:nowrap;line-height:16px}
.bi{height:37px;padding-top:4px}
.bi svg{display:block}
.big span{height:16px;display:block}
.tool{display:flex;align-items:center;gap:4px;height:23px;white-space:nowrap}
.clip{display:flex}
.paste{width:27px;margin-right:10px}
.paste .bi{align-self:flex-start}
.clipcol{margin-top:-1px}
.copyc{margin-left:9px}
.rw1{display:flex;align-items:center;height:23px;margin-top:7px}
.rw2{display:grid;align-items:center;justify-items:center;height:22px;margin-top:8px}
.sep{display:block;width:1px;height:22px;background:#c9c9c9}
.combo{height:23px;background:#fff;border:1px solid #c6c6c6;display:flex;align-items:center;justify-content:space-between;padding:0 5px 0 3px;color:#444}
.cf{width:111px;margin-left:3px}
.cs{width:43px;margin-left:0;border-left:0}
.gA{font-size:16px;position:relative;width:22px;text-align:center;color:#555}
.gA.dn{font-size:13px}
.gA i{position:absolute;right:1px;top:1px;border:3px solid transparent;border-top:0;border-bottom:3px solid #2f75b5}
.gA.dn i{border-bottom:0;border-top:3px solid #2f75b5}
.font2{grid-template-columns:27px 18px 25px 8px 14px 16px 17px 7px 25px 7px 27px 7px}
.tb,.ti,.tu{font-size:13px;color:#555}
.ti{font-family:"Liberation Serif",serif;font-style:italic;font-size:14px;font-weight:700}
.tu{font-weight:700}
.fc{width:16px;text-align:center;font-size:14px;line-height:13px;color:#555;border-bottom:4px solid #f00}
.al1{display:grid;grid-template-columns:30px 15px 28px 2px 42px 19px auto;justify-items:center}
.al2{grid-template-columns:30px 15px 28px 2px 30px 12px 19px auto}
.al1 .wrap,.al2 .wrap{justify-self:start}
.alsel{width:22px;height:23px;background:#c6c6c6;display:flex;align-items:flex-end;justify-content:center;padding-bottom:4px}
.alsel svg{display:block}
.orient{display:flex;align-items:center;gap:3px}
.mergec{margin-left:8px}
.g-num .rw1{padding-left:4px}
.cg{width:130px;padding-right:5px;padding-left:5px}
.num2{grid-template-columns:24px 8px 27px 15px 16px 15px 28px;padding-left:4px}
.dollar{font-size:14px;color:#555}
.pct{font-size:14px;color:#555}
.comma{font-size:15px;color:#555;margin-top:-6px}
.stylesrow{display:flex}
.bcf{width:80px}.bft{width:48px}
.gallery{margin-left:6px;margin-top:2px;width:547px;height:62px;background:#fff;border:1px solid #b9b9b9;display:flex}
.cellstyles{width:531px;padding:5px 0 0 3px;display:grid;grid-template-columns:repeat(5,100px);grid-template-rows:22px 22px;gap:6px;flex:none}
.st{font:14px/20px Lato,sans-serif;padding-left:4px;white-space:nowrap;overflow:hidden;border:1px solid transparent}
.s-normal{outline:3px solid #c6c6c6;color:#000}
.s-bad{background:#ffc7ce;color:#9c0006}
.s-good{background:#c6efce;color:#006100}
.s-neutral{background:#ffeb9c;color:#9c6500}
.s-calc{background:#f2f2f2;border-color:#7f7f7f;color:#fa7d00;font-weight:700}
.s-check{background:#a5a5a5;border:3px double #3f3f3f;color:#fff;font-weight:700;line-height:16px;padding-left:2px}
.s-expl{color:#7f7f7f;font-style:italic}
.s-input{background:#fc9;border-color:#7f7f7f;color:#3f3f76}
.s-linked{color:#fa7d00;border:0;border-bottom:3px double #fa7d00;padding-left:5px}
.s-note{background:#ffc;border-color:#b2b2b2;color:#000}
.gscroll{flex:1;display:flex;flex-direction:column;border-left:1px solid #c6c6c6}
.gscroll span{flex:1;display:flex;align-items:center;justify-content:center;border-bottom:1px solid #c6c6c6}
.gscroll .gmore{border-bottom:0;border-top:0;flex-direction:column;gap:0}
.gup{background:#e6e6e6}
.gmore::before{content:"";width:7px;height:1px;background:#666;margin-bottom:2px}
.cellsrow{display:grid;grid-template-columns:48px 38px 46px}
.editrow{display:grid;grid-template-columns:100px 34px 52px}
.editcol{padding-left:7px;margin-top:-1px}
.sumc{margin-left:9px}

.fbar{height:47px;flex:none;display:flex;padding-top:11px;background:#e6e6e6}
.fbox{height:25px;background:#fff;border:1px solid #c6c6c6;display:flex;align-items:center}
.namebox{width:95px;justify-content:space-between;padding:0 7px 0 0;font-size:13px;color:#333}
.grip{width:30px;background:radial-gradient(circle,#a8a8a8 1px,transparent 1.500px) 14px 4px/2px 5px repeat-y;height:17px;margin-top:4px}
.fxbox{width:110px;display:grid;grid-template-columns:38px 36px 36px;justify-items:center}
.fxbox em{font:italic 400 15px "Liberation Serif",serif;color:#444}
.finput{width:1667px;margin-left:3px;padding:0 5px 0 11px;justify-content:space-between;font-size:13px;color:#444}

.work{height:678px;display:flex;flex:none}
.sheet{width:1568px;height:678px;overflow:hidden;position:relative;background:#fff;flex:none}
.sh{table-layout:fixed;border-collapse:separate;border-spacing:0;width:1568px;font:14px/19px Lato,sans-serif;color:#111}
.w14{width:14px}.w115{width:115px}.w64{width:64px}.w111{width:111px}.w84{width:84px}.w109{width:109px}.w80{width:80px}.w44{width:44px}
.sh td{height:20px;padding:0 2px;border:0;border-right:1px solid #d4d4d4;border-bottom:1px solid #d4d4d4;white-space:nowrap;overflow:hidden;position:relative}
.sh td:nth-child(10),.sh td:nth-child(16){padding-right:0}
.sh thead th{height:19px;background:#e6e6e6;border-right:1px solid #ababab;border-bottom:1px solid #ababab;font-weight:400;padding:0;color:#333;line-height:18px}
.sh thead .corner{border-right:0;text-align:left}
.corner svg{display:block;margin-top:3px}
.sh thead .sc{background:#d2d2d2;color:#217346;border-bottom:2px solid #217346}
.sh tbody th{height:20px;padding:0;background:#e6e6e6;border-bottom:1px solid #c6c6c6;font-weight:400;overflow:hidden;color:#444}
.sh tbody th span{display:block;width:26px;margin-left:-13px;text-align:center}
.sh tbody .sr{background:#d2d2d2;color:#217346;border-right:2px solid #217346}
.sh td:is(:nth-child(4),:nth-child(5),:nth-child(6),:nth-child(11),:nth-child(12),:nth-child(17),:nth-child(18)){text-align:right}
.sh .tl td{text-align:left}
.sh .tl .y{background:#ff0;text-align:center;border-right-color:#ff0;border-bottom-color:#ff0;font-size:14px}
.sh .ph td:nth-child(n+9){text-align:left}

.sh .pr td:nth-child(n+9):nth-child(-n+12){background:#c6c6c6;border-color:#a9a9a9}
.sh .pr td:nth-child(9){border-bottom-color:#c6c6c6}
.sh .pr td:nth-child(n+11):nth-child(-n+12),.sh .pt td:nth-child(n+11):nth-child(-n+12){padding-right:7px}
.sh .pl td:nth-child(n+10):nth-child(-n+12){border-bottom-color:#305496}
.sh .pl td:nth-child(9){border-bottom-color:#305496}
.sh .ph td:nth-child(n+9):nth-child(-n+12){background:#a5acbd;border-bottom-color:#305496;border-right-color:#a5acbd;font-weight:700}
.sh .ph td.act:nth-child(9){background:#dae1f1;border-right-color:#dae1f1}
.sh .pt td:nth-child(n+9):nth-child(-n+12){background:#a6a6a6;border-right-color:#a6a6a6;border-bottom-color:#305496;font-weight:700;color:#111}
.sh .pg td:nth-child(n+9):nth-child(-n+12){background:#a5acbd;border-right-color:#a5acbd;border-bottom-color:#a5acbd}
.sh td b{font-weight:700}
.fb{position:absolute;right:1px;top:2px;width:16px;height:16px;border:1px solid #8b8b8b;background:#a6a6a6}
.act .fb{background:#fff}
.fb::after{content:"";position:absolute;left:3px;top:5px;border:4px solid transparent;border-top:5px solid #666;border-bottom:0}
.mn{display:inline-block;width:9px;height:9px;border:1px solid #7d8aa8;background:#c6c6c6;margin:0 2px;position:relative;vertical-align:0}
.mn::after{content:"";position:absolute;left:1px;right:1px;top:3px;height:1px;background:#444}
.sel{position:absolute;left:563px;top:58px;width:386px;height:602px;border:2px solid #217346;box-shadow:inset 0 0 0 1px #fff}
.handle{position:absolute;right:-5px;bottom:-5px;width:7px;height:7px;background:#217346;border:1px solid #fff}
.vscroll{width:21px;flex:none;padding:3px 3px 0 4px;display:flex;flex-direction:column;gap:1px}
.vup{height:14px;background:#fff;border:1px solid #c6c6c6;display:flex;align-items:center;justify-content:center}
.vtrack{flex:1;background:#fff;border:1px solid #c6c6c6}

.panel{width:319px;flex:none;background:#e6e6e6;border-left:1px solid #c6c6c6;padding:14px 13px 0 13px;font-size:12px;color:#444;height:678px;overflow:hidden}
.phead{height:26px;display:flex;align-items:center}
.phead h2{margin:0;font:300 20.800px/26px Roboto,sans-serif;color:#217346;flex:1}
.pcaret{border-width:5px;border-top-width:6px;border-bottom:0;border-top-color:#888;margin-right:30px}
.phead svg{margin-right:4px}
.pchoose{margin-top:7px;height:26px;display:flex;align-items:center;justify-content:space-between;padding-left:1px}
.gear{width:44px;height:26px;border:1px solid #b9b9b9;background:#e6e6e6;display:flex;align-items:center;justify-content:center;gap:7px}
.psearch{margin-top:14px;height:20px;background:#fff;border:1px solid #b9b9b9;display:flex;align-items:center;justify-content:space-between;padding:0 2px;color:#666}
.plist{margin-top:16px;height:282px;background:#fff}
.f{height:19px;display:flex;align-items:center;gap:6px;padding-left:1px;position:relative;top:-1px;color:#333}
.f.on{font-weight:700}
.cb{width:13px;height:13px;border:1px solid #8a8a8a;background:#fff;display:block}
.cb svg{display:block;margin:0}
.more{margin-top:8px;padding-left:2px;line-height:19px;color:#444}
.pdrag{margin-top:18px;border-top:1px dotted #aaa;height:23px;line-height:25px;padding-left:3px}
.areas{margin-top:14px;display:grid;grid-template-columns:144px 147px;grid-template-rows:150px auto;margin-left:3px;margin-right:-1px}
.area{display:flex;flex-direction:column;border-bottom:1px solid #c6c6c6}
.ar{border-left:1px solid #c6c6c6;padding-left:2px}
.low{border-bottom:0;padding-top:1px}
.ah{height:20px;display:flex;align-items:center;gap:9px;padding:0 0 4px 3px;flex:none}
.ah em{font:15px "Liberation Serif",serif;color:#888;width:11px}
.low .ah{height:27px;padding-top:3px;padding-bottom:0}
.abox{width:138px;height:124px;background:#fff;padding:1px}
.ar .abox{width:143px}
.low .abox{height:60px}
.pill{height:20px;background:#fff;border:1px solid #c6c6c6;display:flex;align-items:center;justify-content:space-between;padding:0 9px 0 6px;margin-bottom:1px;color:#444}
.pill em{font:15px "Liberation Serif",serif;color:#888;margin-right:6px}
.pill .c{border-top-color:#777;border-width:4px;border-top-width:4px;border-bottom:0}
.collapse{position:absolute;left:1890px;top:81px}
```
